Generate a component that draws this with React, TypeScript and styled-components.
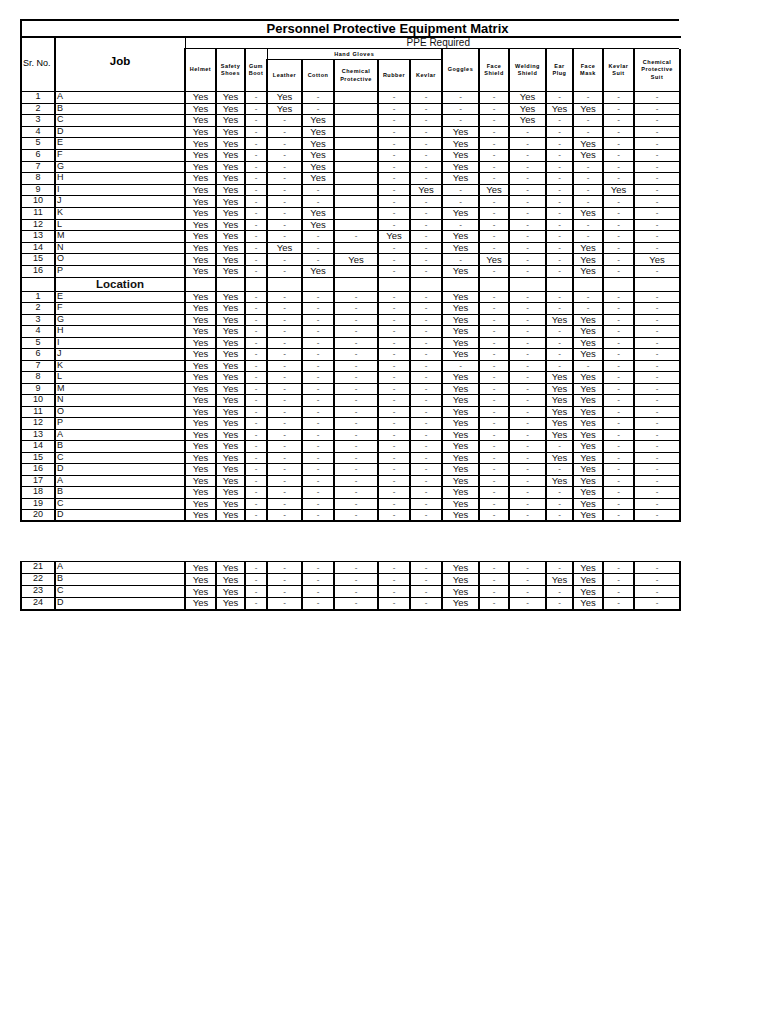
import React from 'react';
import styled, { createGlobalStyle } from 'styled-components';

const GlobalStyle = createGlobalStyle`
    html, body {
        margin: 0;
        padding: 0;
        background: #fff;
    }
    body {
        font-family: "Liberation Sans", Arial, sans-serif;
        color: #000;
    }
`;

const Page = styled.div`
    padding: 19px 0 0 20px;
    width: 748px;
    height: 1024px;
    box-sizing: border-box;
`;

const Sheet = styled.table<{ $gap?: number }>`
    border-collapse: collapse;
    table-layout: fixed;
    width: 659px;
    margin-top: ${p => p.$gap ?? 0}px;
    border-bottom: 2px solid #000;
    border-left: 2px solid #000;
    border-right: 2px solid #000;
`;

const TitleRow = styled.tr`
    height: 17px;
`;

const TitleCell = styled.td`
    border-top: 2px solid #000;
    border-bottom: 2px solid #000;
    border-left: 2px solid #000;
    border-right: 2px solid #fff;
    text-align: center;
    font-size: 13px;
    font-weight: 700;
    padding: 0 0 0 74px;
    line-height: 14px;
    vertical-align: bottom;
`;

const RequiredCell = styled.td`
    border-bottom: 1px solid #000;
    border-left: 1px solid #000;
    border-right: 2px solid #fff;
    text-align: center;
    font-size: 10px;
    line-height: 10px;
    padding: 0 0 0 12px;
    vertical-align: top;
    color: #111;
`;

const LeadCell = styled.td<{ $big?: boolean }>`
    border: 1px solid #000;
    border-left-width: 2px;
    text-align: ${p => (p.$big ? 'center' : 'left')};
    font-size: ${p => (p.$big ? '11.5px' : '9px')};
    font-weight: ${p => (p.$big ? 700 : 400)};
    padding: 0 0 ${p => (p.$big ? 7 : 4)}px ${p => (p.$big ? 0 : 1)}px;
    vertical-align: middle;
`;

const GroupCell = styled.td`
    border: 1px solid #000;
    text-align: center;
    font-size: 5.5px;
    font-weight: 700;
    letter-spacing: 0.6px;
    line-height: 8px;
    padding: 0;
    vertical-align: middle;
`;

const HeadCell = styled.td`
    border: 1px solid #000;
    border-left-width: 2px;
    text-align: center;
    font-size: 5.5px;
    font-weight: 700;
    letter-spacing: 0.5px;
    line-height: 7.5px;
    padding: 0 1px;
    vertical-align: middle;
    white-space: pre-line;
`;

const DataRow = styled.tr<{ $h: number }>`
    height: ${p => p.$h}px;
`;

const NumCell = styled.td`
    border: 1px solid #000;
    border-left-width: 2px;
    border-right-width: 2px;
    text-align: center;
    font-size: 9px;
    line-height: 8px;
    padding: 0 0 2px;
    vertical-align: top;
    overflow: hidden;
    color: #111;
`;

const NameCell = styled.td<{ $section?: boolean }>`
    border: 1px solid #000;
    border-right-width: 2px;
    text-align: ${p => (p.$section ? 'center' : 'left')};
    font-size: ${p => (p.$section ? '11.5px' : '9px')};
    font-weight: ${p => (p.$section ? 700 : 400)};
    line-height: ${p => (p.$section ? '12px' : '8px')};
    padding: 0 0 ${p => (p.$section ? 0 : 2)}px ${p => (p.$section ? 0 : 1)}px;
    vertical-align: top;
    overflow: hidden;
    white-space: nowrap;
    color: #111;
`;

const MarkCell = styled.td<{ $yes?: boolean }>`
    border: 1px solid #000;
    border-left-width: 2px;
    border-right-width: 2px;
    text-align: center;
    font-size: ${p => (p.$yes ? '9.5px' : '8px')};
    line-height: 10px;
    padding: 0;
    vertical-align: middle;
    overflow: hidden;
    color: ${p => (p.$yes ? '#111' : '#333')};
`;

const COLS = [34, 130, 31, 29, 22, 35, 32, 44, 32, 32, 37, 30, 37, 27, 30, 31, 46];

const PRE_GLOVES = ['Helmet', 'Safety\nShoes', 'Gum\nBoot'];
const GLOVES = ['Leather', 'Cotton', 'Chemical\nProtective', 'Rubber', 'Kevlar'];
const POST_GLOVES = ['Goggles', 'Face\nShield', 'Welding\nShield', 'Ear\nPlug', 'Face\nMask', 'Kevlar\nSuit', 'Chemical\nProtective\nSuit'];

type Row = { no: number; name: string; marks: string };

// marks: one char per PPE column — Y = Yes, - = dash, _ = empty
const JOBS: Row[] = [
    { no: 1, name: 'A', marks: 'YY-Y-_----Y----' },
    { no: 2, name: 'B', marks: 'YY-Y-_----YYY--' },
    { no: 3, name: 'C', marks: 'YY--Y_----Y----' },
    { no: 4, name: 'D', marks: 'YY--Y_--Y------' },
    { no: 5, name: 'E', marks: 'YY--Y_--Y---Y--' },
    { no: 6, name: 'F', marks: 'YY--Y_--Y---Y--' },
    { no: 7, name: 'G', marks: 'YY--Y_--Y------' },
    { no: 8, name: 'H', marks: 'YY--Y_--Y------' },
    { no: 9, name: 'I', marks: 'YY---_-Y-Y---Y-' },
    { no: 10, name: 'J', marks: 'YY---_---------' },
    { no: 11, name: 'K', marks: 'YY--Y_--Y---Y--' },
    { no: 12, name: 'L', marks: 'YY--Y_---------' },
    { no: 13, name: 'M', marks: 'YY----Y-Y------' },
    { no: 14, name: 'N', marks: 'YY-Y-_--Y---Y--' },
    { no: 15, name: 'O', marks: 'YY---Y---Y--Y-Y' },
    { no: 16, name: 'P', marks: 'YY--Y_--Y---Y--' },
];

const loc = (no: number, name: string, goggles: boolean, ear: boolean, mask: boolean): Row => ({
    no,
    name,
    marks: `YY------${goggles ? 'Y' : '-'}--${ear ? 'Y' : '-'}${mask ? 'Y' : '-'}--`,
});

const LOCATIONS: Row[] = [
    loc(1, 'E', true, false, false),
    loc(2, 'F', true, false, false),
    loc(3, 'G', true, true, true),
    loc(4, 'H', true, false, true),
    loc(5, 'I', true, false, true),
    loc(6, 'J', true, false, true),
    loc(7, 'K', false, false, false),
    loc(8, 'L', true, true, true),
    loc(9, 'M', true, true, true),
    loc(10, 'N', true, true, true),
    loc(11, 'O', true, true, true),
    loc(12, 'P', true, true, true),
    loc(13, 'A', true, true, true),
    loc(14, 'B', true, false, true),
    loc(15, 'C', true, true, true),
    loc(16, 'D', true, false, true),
    loc(17, 'A', true, true, true),
    loc(18, 'B', true, false, true),
    loc(19, 'C', true, false, true),
    loc(20, 'D', true, false, true),
];

const EXTRA: Row[] = [
    loc(21, 'A', true, false, true),
    loc(22, 'B', true, true, true),
    loc(23, 'C', true, false, true),
    loc(24, 'D', true, false, true),
];

function Cols() {
    return (
        <colgroup>
            {COLS.map((w, i) => <col key={i} style={{ width: w }} />)}
        </colgroup>
    );
}

function DataLine({ row, height }: { row: Row; height: number }) {
    return (
        <DataRow $h={height}>
            <NumCell>{row.no}</NumCell>
            <NameCell>{row.name}</NameCell>
            {row.marks.split('').map((m, i) => (
                <MarkCell key={i} $yes={m === 'Y'}>
                    {m === 'Y' ? 'Yes' : m === '-' ? '-' : ''}
                </MarkCell>
            ))}
        </DataRow>
    );
}

export default function App() {
    return (
        <>
            <GlobalStyle />
            <Page>
                <Sheet>
                    <Cols />
                    <tbody>
                        <TitleRow>
                            <TitleCell colSpan={17}>Personnel Protective Equipment Matrix</TitleCell>
                        </TitleRow>
                        <DataRow $h={11}>
                            <LeadCell rowSpan={3}>Sr. No.</LeadCell>
                            <LeadCell rowSpan={3} $big>Job</LeadCell>
                            <RequiredCell colSpan={15}>PPE Required</RequiredCell>
                        </DataRow>
                        <DataRow $h={11}>
                            {PRE_GLOVES.map(h => <HeadCell key={h} rowSpan={2}>{h}</HeadCell>)}
                            <GroupCell colSpan={5}>Hand Gloves</GroupCell>
                            {POST_GLOVES.map(h => <HeadCell key={h} rowSpan={2}>{h}</HeadCell>)}
                        </DataRow>
                        <DataRow $h={32}>
                            {GLOVES.map(h => <HeadCell key={h}>{h}</HeadCell>)}
                        </DataRow>
                        {JOBS.map(r => <DataLine key={`j${r.no}`} row={r} height={11.6} />)}
                        <DataRow $h={14}>
                            <NumCell />
                            <NameCell $section>Location</NameCell>
                            {Array.from({ length: 15 }).map((_, i) => <MarkCell key={i} />)}
                        </DataRow>
                        {LOCATIONS.map(r => <DataLine key={`l${r.no}`} row={r} height={11.5} />)}
                    </tbody>
                </Sheet>
                <Sheet $gap={39}>
                    <Cols />
                    <tbody>
                        {EXTRA.map(r => <DataLine key={`e${r.no}`} row={r} height={12} />)}
                    </tbody>
                </Sheet>
            </Page>
        </>
    );
}
